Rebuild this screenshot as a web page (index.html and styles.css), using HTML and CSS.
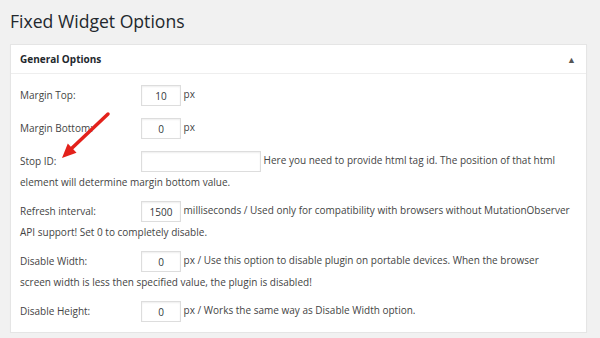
FILE: index.html
```html
<!DOCTYPE html>
<html lang="en">
<head>
    <meta charset="UTF-8">
    <title>Fixed Widget Options</title>
    <link rel="stylesheet" href="styles.css">
</head>
<body>
    <div class="wrap">
        <h1>Fixed Widget Options</h1>

        <div class="postbox">
            <div class="postbox-head">
                <h2>General Options</h2>
                <span class="toggle">&#9650;</span>
            </div>
            <div class="inside">
                <p class="row">
                    <label class="lbl">Margin Top:</label><input class="small" type="text" value="10"> px
                </p>
                <p class="row">
                    <label class="lbl">Margin Bottom:</label><input class="small" type="text" value="0"> px
                </p>
                <p class="row">
                    <label class="lbl">Stop ID:</label><input class="wide" type="text" value=""> Here you need to provide html tag id. The position of that html element will determine margin bottom value.
                </p>
                <p class="row">
                    <label class="lbl">Refresh interval:</label><input class="small" type="text" value="1500"> milliseconds / Used only for compatibility with browsers without MutationObserver API support! Set 0 to completely disable.
                </p>
                <p class="row">
                    <label class="lbl">Disable Width:</label><input class="small" type="text" value="0"> px / Use this option to disable plugin on portable devices. When the browser screen width is less then specified value, the plugin is disabled!
                </p>
                <p class="row">
                    <label class="lbl">Disable Height:</label><input class="small" type="text" value="0"> px / Works the same way as Disable Width option.
                </p>
            </div>
        </div>

        <!-- red pointer drawn over the form -->
        <svg class="pointer" width="58" height="54" viewBox="0 0 58 54">
            <line x1="52" y1="6" x2="15" y2="41" stroke="#e3211b" stroke-width="3.5" stroke-linecap="round"/>
            <polygon points="6,50 20.5,44.8 11.8,35.6" fill="#e3211b"/>
        </svg>
    </div>
</body>
</html>
```

FILE: styles.css
```css
body {
    margin: 0;
    background: #f1f1f1;
    color: #444;
    font-family: "Open Sans", sans-serif;
    font-size: 10px;
}
.wrap {
    position: relative;
    padding: 0 13px 0 10px;
}
h1 {
    margin: 0;
    padding: 10px 0 11px;
    font-size: 17.6px;
    font-weight: 400;
    line-height: 23px;
    color: #23282d;
}
.postbox {
    background: #fff;
    border: 1px solid #e5e5e5;
    box-shadow: 0 1px 1px rgba(0, 0, 0, .04);
}
.postbox-head {
    display: flex;
    align-items: center;
    justify-content: space-between;
    height: 28px;
    padding: 0 10px 0 9px;
    border-bottom: 1px solid #eee;
}
.postbox-head h2 {
    margin: 0;
    font-size: 10px;
    font-weight: 700;
    color: #23282d;
}
.toggle {
    font-size: 9px;
    color: #555;
}
.inside {
    padding: 9px 15px 8px 9px;
}
.row {
    margin: 0 0 8px;
    line-height: 17px;
}
.row:last-child {
    margin-bottom: 0;
}
.lbl {
    display: inline-block;
    width: 121px;
    vertical-align: middle;
}
input {
    box-sizing: border-box;
    height: 21px;
    margin: 2px 0;
    padding: 0 4px;
    border: 1px solid #ddd;
    box-shadow: inset 0 1px 2px rgba(0, 0, 0, .07);
    background: #fff;
    color: #32373c;
    font-family: "Open Sans", sans-serif;
    font-size: 10px;
    text-align: center;
    vertical-align: middle;
}
.small { width: 40px; }
.wide { width: 120px; }
.pointer {
    position: absolute;
    left: 56px;
    top: 108px;
}
```
